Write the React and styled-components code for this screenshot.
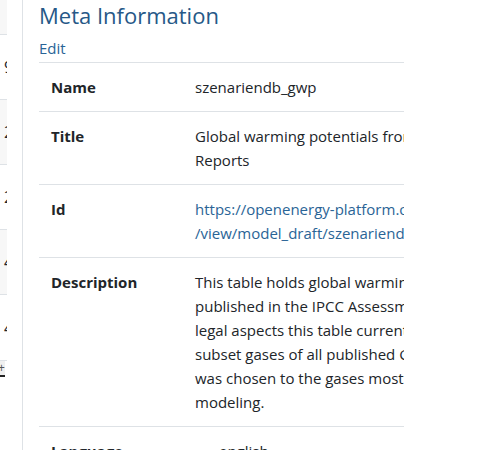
import React from "react";
import styled, { createGlobalStyle } from "styled-components";

const GlobalStyle = createGlobalStyle`
  body {
    margin: 0;
    background: #fff;
    font-family: "Open Sans", "Noto Sans", sans-serif;
    color: #212529;
  }
`;

const sideRows = [
  { height: 35, striped: true, digit: "" },
  { height: 65, striped: false, digit: "9" },
  { height: 65, striped: true, digit: "2" },
  { height: 65, striped: false, digit: "2" },
  { height: 65, striped: true, digit: "4" },
  { height: 66, striped: false, digit: "4" },
];

const metaRows = [
  { label: "Name", lines: ["szenariendb_gwp"] },
  {
    label: "Title",
    lines: ["Global warming potentials from IPCC Assessment", "Reports"],
  },
  {
    label: "Id",
    link: true,
    lines: [
      "https://openenergy-platform.org/dataedit",
      "/view/model_draft/szenariendb_gwp",
    ],
  },
  {
    label: "Description",
    lines: [
      "This table holds global warming potentials (GWP)",
      "published in the IPCC Assessment Reports. Due to",
      "legal aspects this table currently only holds a",
      "subset gases of all published GWPs. The selection",
      "was chosen to the gases most relevant for energy",
      "modeling.",
    ],
  },
];

const Page = styled.div`
  display: flex;
  height: 450px;
  overflow: hidden;
`;

const Sidebar = styled.aside`
  flex: 0 0 22px;
  border-right: 1px solid #dee2e6;
  display: flex;
  flex-direction: column;
`;

const SideCell = styled.div`
  width: 7px;
  height: ${(p) => p.$height}px;
  box-sizing: border-box;
  overflow: hidden;
  background: ${(p) => (p.$striped ? "#f7f7f7" : "#fff")};
  border-bottom: 1px solid #dee2e6;
  display: flex;
  align-items: center;
  padding-left: 4px;
  font-size: 16px;
  white-space: nowrap;
`;

const SideTab = styled.div`
  width: 7px;
  height: 16px;
  box-sizing: border-box;
  overflow: hidden;
  background: #f0f0f0;
  border-bottom: 2px solid #222;
  font-size: 12px;
  line-height: 14px;
  color: #555;
  margin-left: -2px;
`;

const Main = styled.main`
  width: 365px;
  padding-left: 16px;
  overflow: hidden;
`;

const Heading = styled.h3`
  margin: 2px 0 10px;
  font-size: 22px;
  font-weight: 400;
  line-height: 1.2;
  color: #265887;
  white-space: nowrap;
`;

const EditLink = styled.a`
  display: block;
  font-size: 15px;
  line-height: 20px;
  color: #2a6496;
  text-decoration: none;
  margin-bottom: 4px;
`;

const MetaTable = styled.table`
  width: 640px;
  border-collapse: collapse;
  font-size: 15px;
  line-height: 24px;
`;

const Row = styled.tr`
  border-top: 1px solid #dee2e6;
`;

const Label = styled.th`
  width: 120px;
  padding: 12px 12px 12px 12px;
  text-align: left;
  vertical-align: top;
  font-weight: 700;
`;

const Value = styled.td`
  padding: 12px 12px 12px 12px;
  vertical-align: top;
  white-space: nowrap;
  color: ${(p) => (p.$link ? "#2a6496" : "#212529")};
`;

const List = styled.ul`
  margin: 0;
  padding-left: 24px;
`;

export default function App() {
  return (
    <>
      <GlobalStyle />
      <Page>
        <Sidebar>
          {sideRows.map((r, i) => (
            <SideCell key={i} $height={r.height} $striped={r.striped}>
              {r.digit}
            </SideCell>
          ))}
          <SideTab>+</SideTab>
        </Sidebar>
        <Main>
          <Heading>Meta Information</Heading>
          <EditLink href="#">Edit</EditLink>
          <MetaTable>
            <tbody>
              {metaRows.map((row) => (
                <Row key={row.label}>
                  <Label>{row.label}</Label>
                  <Value $link={row.link}>
                    {row.lines.map((line, i) => (
                      <React.Fragment key={i}>
                        {i > 0 && <br />}
                        {line}
                      </React.Fragment>
                    ))}
                  </Value>
                </Row>
              ))}
              <Row>
                <Label>Language</Label>
                <Value>
                  <List>
                    <li>english</li>
                  </List>
                </Value>
              </Row>
            </tbody>
          </MetaTable>
        </Main>
      </Page>
    </>
  );
}
